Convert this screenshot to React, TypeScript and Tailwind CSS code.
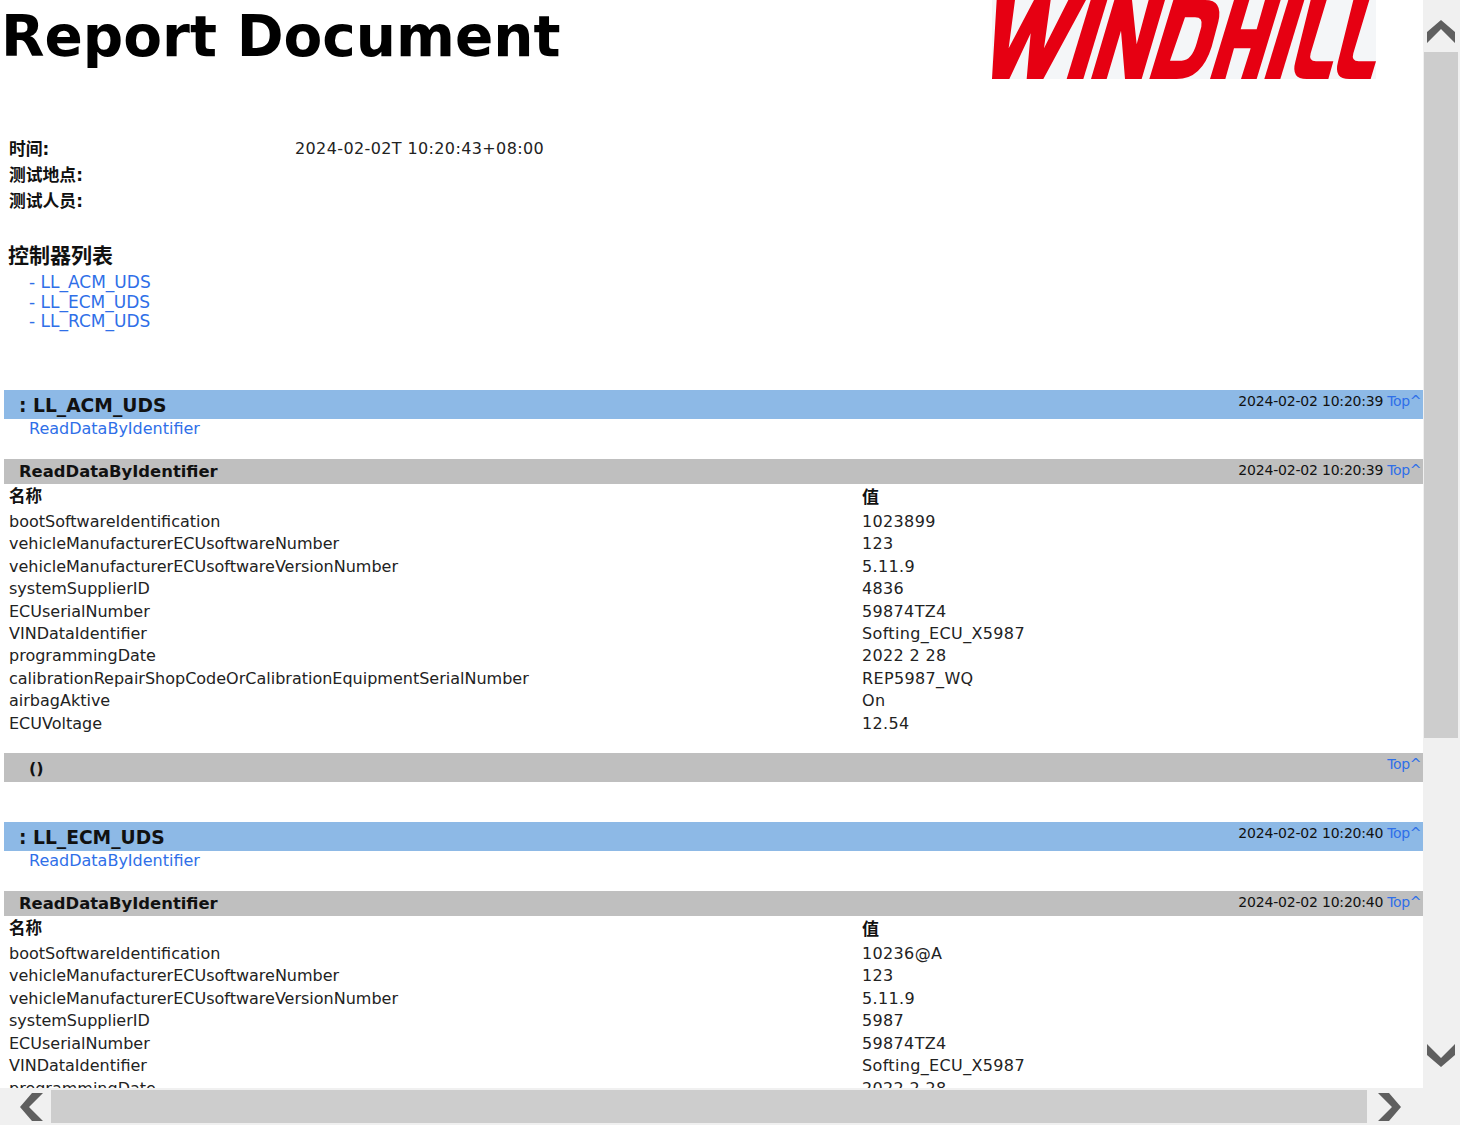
const FONT = "font-['DejaVu_Sans','Noto_Sans_CJK_SC',sans-serif]";

const ECU_ROWS_ACM = [
  ['bootSoftwareIdentification', '1023899'],
  ['vehicleManufacturerECUsoftwareNumber', '123'],
  ['vehicleManufacturerECUsoftwareVersionNumber', '5.11.9'],
  ['systemSupplierID', '4836'],
  ['ECUserialNumber', '59874TZ4'],
  ['VINDataIdentifier', 'Softing_ECU_X5987'],
  ['programmingDate', '2022 2 28'],
  ['calibrationRepairShopCodeOrCalibrationEquipmentSerialNumber', 'REP5987_WQ'],
  ['airbagAktive', 'On'],
  ['ECUVoltage', '12.54'],
];

const ECU_ROWS_ECM = [
  ['bootSoftwareIdentification', '10236@A'],
  ['vehicleManufacturerECUsoftwareNumber', '123'],
  ['vehicleManufacturerECUsoftwareVersionNumber', '5.11.9'],
  ['systemSupplierID', '5987'],
  ['ECUserialNumber', '59874TZ4'],
  ['VINDataIdentifier', 'Softing_ECU_X5987'],
  ['programmingDate', '2022 2 28'],
  ['calibrationRepairShopCodeOrCalibrationEquipmentSerialNumber', 'REP5987_WQ'],
];

function WindhillLogo() {
  return (
    <svg viewBox="96 0 1152 237" className="w-[384px] h-[79px] bg-[#f4f6f8]">
      <g fill="#e60012">
        <polygon points="110,0 165,0 146,145 222,0 272,0 252,145 325,0 378,0 250,237 200,237 212,100 148,237 96,237" />
        <polygon points="392,0 442,0 370,237 320,237" />
        <polygon points="463,0 516,0 530,133 566,0 615,0 545,237 495,237 483,92 440,237 393,237" />
        <path
          fillRule="evenodd"
          d="M640,0 L735,0 Q790,0 775,65 L755,140 Q725,237 650,237 L568,237 Z M675,52 L630,182 L665,182 Q695,182 710,130 L724,80 Q730,52 705,52 Z"
        />
        <polygon points="822,0 868,0 842,88 890,88 915,0 962,0 890,237 843,237 872,145 822,145 796,237 750,237" />
        <polygon points="985,0 1033,0 961,237 913,237" />
        <path d="M1052,0 L1100,0 L1052,160 Q1045,184 1068,184 L1120,184 L1105,237 L1040,237 Q992,237 1006,185 Z" />
        <path d="M1180,0 L1228,0 L1180,160 Q1173,184 1196,184 L1248,184 L1232,237 L1168,237 Q1120,237 1134,185 Z" />
      </g>
    </svg>
  );
}

function Chevron({ dir }: { dir: 'up' | 'down' | 'left' | 'right' }) {
  const points = {
    up: '1,23 15,9 29,23 29,12 15,0 1,12',
    down: '1,0 15,14 29,0 29,11 15,23 1,11',
    left: '23,1 9,15 23,29 12,29 0,15 12,1',
    right: '0,1 14,15 0,29 11,29 23,15 11,1',
  }[dir];
  return (
    <svg viewBox={dir === 'up' || dir === 'down' ? '0 0 30 24' : '0 0 24 30'} className={dir === 'up' || dir === 'down' ? 'w-[30px] h-[24px]' : 'w-[24px] h-[30px]'}>
      <polygon points={points} fill="#5f5f5f" />
    </svg>
  );
}

function TopLink({ time }: { time?: string }) {
  return (
    <div className="flex items-start text-[14px] leading-[18px] pr-[2px] pt-[2px]">
      {time && <span className="text-[#111] mr-[4px] tracking-[-0.2px]">{time}</span>}
      <a className="text-[#2f6fe8] tracking-[-0.4px]">Top^</a>
    </div>
  );
}

function EcuSection({ name, time, rows }: { name: string; time: string; rows: string[][] }) {
  return (
    <section className="pb-[40px]">
      <div className="h-[29px] bg-[#8db9e6] flex justify-between pl-[15px]">
        <h2 className="font-bold text-[18.7px] leading-[31px] text-[#111]">: {name}</h2>
        <TopLink time={time} />
      </div>
      <a className="block pl-[25px] h-[40px] text-[16px] leading-[20px] text-[#2f6fe8]">ReadDataByIdentifier</a>
      <div className="h-[25px] bg-[#bfbfbf] flex justify-between pl-[15px]">
        <h3 className="font-bold text-[16.4px] leading-[26px] text-[#111]">ReadDataByIdentifier</h3>
        <TopLink time={time} />
      </div>
      <div className="grid grid-cols-[853px_1fr] pl-[5px] pt-[2px] pb-[18px] text-[16px] leading-[22.4px] text-[#222]">
        <div className="font-bold text-[16.5px] text-[#111] h-[25px]">名称</div>
        <div className="font-bold text-[17px] text-[#111] h-[25px]">值</div>
        {rows.map(([label, value]) => (
          <div key={label} className="contents">
            <div>{label}</div>
            <div className="tracking-[0.35px]">{value}</div>
          </div>
        ))}
      </div>
      <div className="h-[29px] bg-[#bfbfbf] flex justify-between pl-[25px]">
        <span className="font-bold text-[16px] leading-[31px] text-[#111]">()</span>
        <TopLink />
      </div>
    </section>
  );
}

export default function App() {
  return (
    <div className={`w-[1460px] h-[1125px] overflow-hidden bg-white flex flex-col ${FONT}`}>
      <div className="flex flex-1 min-h-0">
        <main className="w-[1423px] overflow-hidden pl-[4px]">
          <header className="h-[136px] flex justify-between">
            <h1 className="font-bold text-[56.5px] leading-[74px] text-black -ml-[3px]">Report Document</h1>
            <div className="mr-[47px]">
              <WindhillLogo />
            </div>
          </header>
          <div className="pl-[5px] text-[16.8px] h-[84px]">
            <div className="flex h-[26px] leading-[26px]">
              <span className="w-[286px] font-bold text-[#111]">时间:</span>
              <span className="text-[#222] text-[16px] tracking-[0.38px]">2024-02-02T 10:20:43+08:00</span>
            </div>
            <div className="h-[26px] leading-[26px] font-bold text-[#111]">测试地点:</div>
            <div className="h-[26px] leading-[26px] font-bold text-[#111]">测试人员:</div>
          </div>
          <div className="h-[170px]">
            <h2 className="pl-[4px] font-bold text-[21px] leading-[30px] pt-[21px] h-[52px] text-[#111]">控制器列表</h2>
            <ul className="pl-[25px] pt-[1px] text-[17px] leading-[19.5px] text-[#2f6fe8]">
              <li>- LL_ACM_UDS</li>
              <li>- LL_ECM_UDS</li>
              <li>- LL_RCM_UDS</li>
            </ul>
          </div>
          <EcuSection name="LL_ACM_UDS" time="2024-02-02 10:20:39" rows={ECU_ROWS_ACM} />
          <EcuSection name="LL_ECM_UDS" time="2024-02-02 10:20:40" rows={ECU_ROWS_ECM} />
        </main>
        <div className="w-[37px] bg-[#f0f0f0] flex flex-col items-center pr-[1px]">
          <div className="h-[52px] flex items-start justify-center pt-[20px] shrink-0">
            <Chevron dir="up" />
          </div>
          <div className="w-[34px] h-[686px] bg-[#cdcdcd] shrink-0" />
          <div className="flex-1 flex items-end pb-[20px]">
            <Chevron dir="down" />
          </div>
        </div>
      </div>
      <div className="h-[37px] bg-[#f0f0f0] flex items-center shrink-0">
        <div className="w-[51px] pl-[20px]">
          <Chevron dir="left" />
        </div>
        <div className="w-[1316px] h-[33px] bg-[#cdcdcd]" />
        <div className="pl-[11px]">
          <Chevron dir="right" />
        </div>
      </div>
    </div>
  );
}
